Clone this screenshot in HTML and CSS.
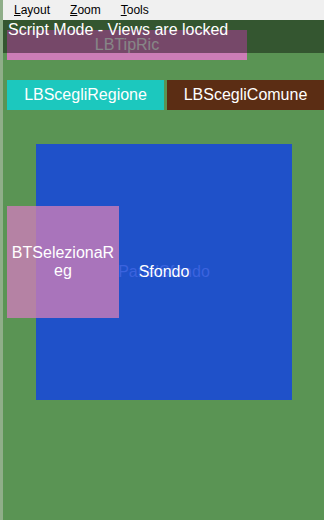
FILE: index.html
```html
<!DOCTYPE html>
<html>
<head>
<meta charset="utf-8">
<link rel="stylesheet" href="styles.css">
</head>
<body>
<div class="app">
  <nav class="menubar">
    <span class="menu-item"><u>L</u>ayout</span>
    <span class="menu-item"><u>Z</u>oom</span>
    <span class="menu-item"><u>T</u>ools</span>
  </nav>
  <main class="canvas">
    <div class="view lb-tipric">LBTipRic</div>
    <div class="view lb-regione">LBScegliRegione</div>
    <div class="view lb-comune">LBScegliComune</div>
    <div class="view panel-sfondo">
      <span class="panel-caption">PanelSfondo</span>
      <span class="panel-label">Sfondo</span>
    </div>
    <div class="view bt-seleziona">BTSelezionaReg</div>
    <div class="script-banner">Script Mode - Views are locked</div>
  </main>
</div>
</body>
</html>
```
FILE: styles.css
```css
html, body {
  margin: 0;
  padding: 0;
  width: 324px;
  height: 520px;
  overflow: hidden;
  background: #5a9454;
  font-family: "Liberation Sans", Arial, sans-serif;
}

.app {
  height: 520px;
  border-left: 3px solid #8fae89;
  display: flex;
  flex-direction: column;
}

.menubar {
  height: 20px;
  background: #f0f0f0;
  display: flex;
  align-items: center;
  gap: 20px;
  padding-left: 11px;
  font-size: 12px;
  color: #000;
}

.menu-item u {
  text-decoration: underline;
  text-underline-offset: 1px;
}

.canvas {
  position: relative;
  flex: 1;
}

.view {
  position: absolute;
  display: flex;
  align-items: center;
  justify-content: center;
  text-align: center;
  font-size: 16px;
  color: #ffffff;
  box-sizing: border-box;
}

.lb-tipric {
  left: 4px;
  top: 10px;
  width: 240px;
  height: 30px;
  background: #cc7db6;
  color: #e8e8e8;
}

.lb-regione {
  left: 4px;
  top: 60px;
  width: 157px;
  height: 30px;
  background: #1cc8be;
}

.lb-comune {
  left: 164px;
  top: 60px;
  width: 157px;
  height: 30px;
  background: #5b2d14;
}

.panel-sfondo {
  left: 33px;
  top: 124px;
  width: 256px;
  height: 256px;
  background: #1f51c9;
}

.panel-caption {
  position: absolute;
  color: #3b63de;
}

.panel-label {
  position: relative;
  color: #ffffff;
}

.bt-seleziona {
  left: 4px;
  top: 186px;
  width: 112px;
  height: 112px;
  padding: 0 3px;
  background: rgba(204, 125, 184, 0.8);
  word-break: break-all;
  line-height: 18px;
}

.script-banner {
  position: absolute;
  left: 0;
  right: 0;
  top: 0;
  height: 33px;
  box-sizing: border-box;
  padding: 1px 0 0 5px;
  background: rgba(0, 0, 0, 0.42);
  color: #ffffff;
  font-size: 16px;
}
```
